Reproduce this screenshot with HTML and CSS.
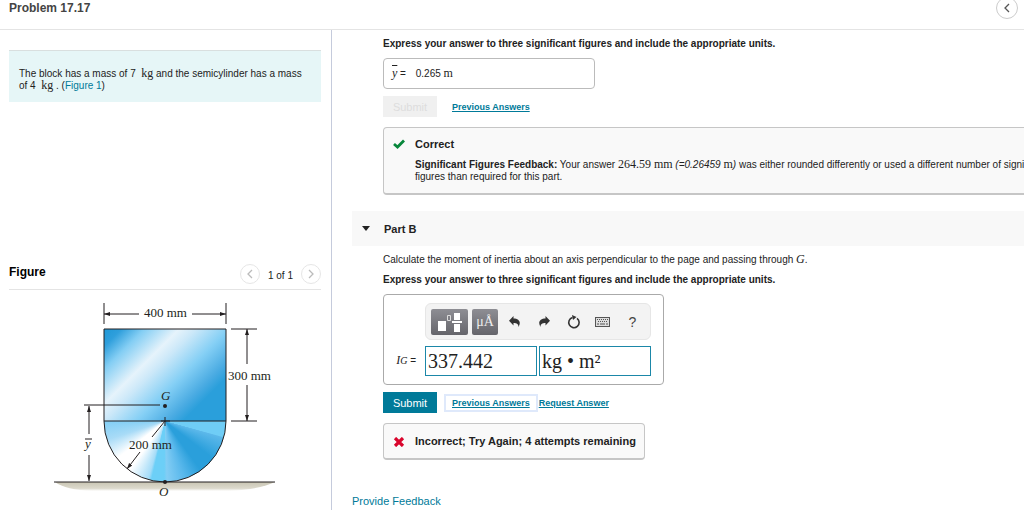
FILE: index.html
```html
<!DOCTYPE html>
<html lang="en">
<head>
    <meta charset="UTF-8">
    <meta name="viewport" content="width=device-width, initial-scale=1.0">
    <title>Problem 17.17</title>
    <link rel="stylesheet" href="styles.css">
</head>

<body>
    <header class="header">
        <h1 class="header__title">Problem 17.17</h1>
        <button class="round round--header" type="button" aria-label="Previous item">
            <svg width="8" height="10" viewBox="0 0 8 10"><path d="M6 1L2 5l4 4"/></svg>
        </button>
    </header>

    <div class="layout">
        <aside class="sidebar">
            <div class="intro">
                The block has a mass of 7 &nbsp;<span class="math">kg</span> and the semicylinder has a mass of 4 &nbsp;<span class="math">kg</span> . (<a href="#figure">Figure 1</a>)
            </div>

            <section class="figure" id="figure">
                <div class="figure__head">
                    <h2 class="figure__title">Figure</h2>
                    <div class="figure__nav">
                        <button class="round" type="button" aria-label="Previous figure">
                            <svg width="8" height="10" viewBox="0 0 8 10"><path d="M6 1L2 5l4 4"/></svg>
                        </button>
                        <span>1 of 1</span>
                        <button class="round" type="button" aria-label="Next figure">
                            <svg width="8" height="10" viewBox="0 0 8 10"><path d="M2 1l4 4-4 4"/></svg>
                        </button>
                    </div>
                </div>

                <svg class="drawing" width="236" height="212" viewBox="0 0 236 212" role="img" aria-label="Block on a semicylinder">
                    <defs>
                        <linearGradient id="block" gradientUnits="userSpaceOnUse" x1="56" y1="43" x2="152" y2="139">
                            <stop offset="0" stop-color="#249ad8"/>
                            <stop offset="0.06" stop-color="#2f9fdc"/>
                            <stop offset="0.18" stop-color="#84cef4"/>
                            <stop offset="0.36" stop-color="#e6f3fb"/>
                            <stop offset="0.45" stop-color="#cbe8f9"/>
                            <stop offset="0.62" stop-color="#84cff5"/>
                            <stop offset="0.78" stop-color="#4aabe2"/>
                            <stop offset="0.86" stop-color="#2a9fdb"/>
                        </linearGradient>
                        <linearGradient id="ground" x1="0" y1="0" x2="0" y2="1">
                            <stop offset="0" stop-color="#c9c5b3"/>
                            <stop offset="0.7" stop-color="#dcd9cc"/>
                            <stop offset="1" stop-color="#ffffff"/>
                        </linearGradient>
                        <marker id="arrow" viewBox="0 0 6 6" refX="6" refY="3" markerWidth="6" markerHeight="6" orient="auto-start-reverse">
                            <path d="M0 1l6 2-6 2z" fill="#231f20"/>
                        </marker>
                    </defs>

                    <path d="M5 192h220q-14 7-45 9H42q-26-1-37-9z" fill="url(#ground)"/>
                    <foreignObject x="54" y="131" width="122" height="61">
                        <div class="drawing__cylinder"></div>
                    </foreignObject>
                    <rect x="54" y="39" width="122" height="92" fill="url(#block)"/>

                    <g fill="none" stroke="#231f20">
                        <path d="M54 39h122v92a61 61 0 0 1-122 0z"/>
                        <path d="M54 131h122M111 131h9M115 127v9M4 192h221"/>
                        <path d="M54 13v21M176 13v21M181 39h26M181 131h26M34 115h76"/>
                        <path d="M89 24H54" marker-end="url(#arrow)"/>
                        <path d="M142 24h34" marker-end="url(#arrow)"/>
                        <path d="M197 74V39" marker-end="url(#arrow)"/>
                        <path d="M197 95v36" marker-end="url(#arrow)"/>
                        <path d="M39 144v-28" marker-end="url(#arrow)"/>
                        <path d="M39 165v26" marker-end="url(#arrow)"/>
                        <path d="M115 131l-13 16"/>
                        <path d="M90 162l-13 17" marker-end="url(#arrow)"/>
                        <path d="M35 149h7"/>
                    </g>
                    <circle cx="115" cy="116" r="2" fill="#231f20"/>
                    <circle cx="115" cy="192" r="2" fill="#231f20"/>

                    <g class="drawing__text">
                        <text x="94" y="27">400 mm</text>
                        <text x="178" y="90">300 mm</text>
                        <text x="79" y="159">200 mm</text>
                        <text x="111" y="110" font-style="italic">G</text>
                        <text x="109" y="206" font-style="italic">O</text>
                        <text x="35" y="158" font-style="italic">y</text>
                    </g>
                </svg>
            </section>
        </aside>

        <main class="content">
            <section class="part">
                <p class="instructions">Express your answer to three significant figures and include the appropriate units.</p>
                <div class="result">
                    <span class="math math--var math--bar">y</span> =
                    <span class="result__value">0.265 <span class="math">m</span></span>
                </div>
                <div class="actions">
                    <button class="submit" type="button" disabled>Submit</button>
                    <a class="actions__link" href="#">Previous Answers</a>
                </div>
                <div class="feedback">
                    <svg class="feedback__icon" width="12" height="10" viewBox="0 0 12 10"><path d="M1 5l3.500 3L11 1.500" fill="none" stroke="#07873b" stroke-width="2.800"/></svg>
                    <div>
                        <h3 class="feedback__title">Correct</h3>
                        <p class="feedback__text"><b>Significant Figures Feedback:</b> Your answer <span class="math">264.59 mm</span> <i>(=0.26459 <span class="math math--up">m</span>)</i> was either rounded differently or used a different number of significant figures than required for this part.</p>
                    </div>
                </div>
            </section>

            <h2 class="part-header">
                <svg width="8" height="5" viewBox="0 0 8 5"><path d="M0 0h8L4 5z" fill="#222"/></svg>
                Part B
            </h2>

            <section class="part part--open">
                <p class="question">Calculate the moment of inertia about an axis perpendicular to the page and passing through <span class="math math--var">G</span>.</p>
                <p class="instructions">Express your answer to three significant figures and include the appropriate units.</p>

                <div class="editor">
                    <div class="toolbar">
                        <button class="toolbar__dark" type="button" aria-label="Templates">
                            <svg width="26" height="20" viewBox="0 0 26 20">
                                <path d="M1 9h8v10H1zM17 1h6v7h-6zM17 12h6v8h-6zM15 9h10v2H15z" fill="#fff"/>
                                <path d="M10.500 3.500h3v5h-3z" fill="none" stroke="#ddd"/>
                            </svg>
                        </button>
                        <button class="toolbar__dark toolbar__dark--units" type="button" aria-label="Units">μÅ</button>
                        <button class="toolbar__tool" type="button" aria-label="Undo">
                            <svg width="12" height="12" viewBox="0 0 12 12"><path d="M4.500 0v2.500C10 2.500 12.500 6 9.500 11c0-3-1.500-4-5-4v2.500L0 4.800z" fill="#333"/></svg>
                        </button>
                        <button class="toolbar__tool" type="button" aria-label="Redo">
                            <svg width="12" height="12" viewBox="0 0 12 12"><path d="M7.500 0v2.500C2 2.500-.5 6 2.500 11c0-3 1.500-4 5-4v2.500L12 4.800z" fill="#333"/></svg>
                        </button>
                        <button class="toolbar__tool" type="button" aria-label="Reset">
                            <svg width="14" height="14" viewBox="0 0 14 14"><path d="M10 3.300A5.200 5.200 0 1 1 5.500 2.500" fill="none" stroke="#333" stroke-width="1.600"/><path d="M5 0l4.500 2L6 5z" fill="#333"/></svg>
                        </button>
                        <button class="toolbar__tool" type="button" aria-label="Keyboard shortcuts">
                            <svg width="15" height="10" viewBox="0 0 15 10"><rect x=".5" y=".5" width="14" height="9" fill="#ddd" stroke="#555"/><path d="M2 2.500h11M3 4.500h10" stroke="#555" stroke-dasharray="1 1"/><path d="M2 7h2m1 0h5m1 0h2" stroke="#555"/></svg>
                        </button>
                        <button class="toolbar__tool" type="button" aria-label="Help">?</button>
                    </div>
                    <label class="editor__label" for="value"><span class="math math--var">I<small>G</small></span> =</label>
                    <div class="editor__fields">
                        <input class="editor__input" id="value" type="text" value="337.442">
                        <input class="editor__input" type="text" value="kg • m²" aria-label="Units">
                    </div>
                </div>

                <div class="actions">
                    <button class="submit" type="button">Submit</button>
                    <a class="actions__link actions__link--focus" href="#">Previous Answers</a>
                    <a class="actions__link" href="#">Request Answer</a>
                </div>
                <div class="feedback feedback--short">
                    <svg class="feedback__icon" width="12" height="10" viewBox="0 0 12 10"><path d="M2 1l8 8M10 1L2 9" fill="none" stroke="#d9052c" stroke-width="3.200"/></svg>
                    <h3 class="feedback__title">Incorrect; Try Again; 4 attempts remaining</h3>
                </div>
            </section>

            <a class="provide" href="#">Provide Feedback</a>
        </main>
    </div>
</body>
</html>
```
FILE: styles.css
```css
*, *::before, *::after {
    box-sizing: border-box;
}
body {
    margin: 0;
    height: 100vh;
    display: flex;
    flex-direction: column;
    overflow: hidden;
    background: #fff;
    color: #222;
    font-family: "Liberation Sans", Arial, sans-serif;
    font-size: 10px;
    line-height: 12px;
}
h1, h2, h3, p {
    margin: 0;
}
a {
    color: #007a99;
    text-decoration: none;
}
button {
    font-family: inherit;
    border: none;
    padding: 0;
    cursor: pointer;
}
.math {
    font-family: "Liberation Serif", "Times New Roman", serif;
    font-size: 12px;
    line-height: 10px;
}
.math--var {
    font-style: italic;
}
.math--up {
    font-style: normal;
}
.math--bar {
    text-decoration: overline;
}
.header {
    flex: none;
    height: 30px;
    display: flex;
    justify-content: space-between;
    padding: 0 6px 0 9px;
    border-bottom: 1px solid #e4e4e4;
}
.header__title {
    color: #444;
    font-size: 12px;
    line-height: 16px;
}
.round {
    width: 20px;
    height: 20px;
    display: flex;
    align-items: center;
    justify-content: center;
    border: 1px solid #e6e6e6;
    border-radius: 50%;
    background: #fff;
}
.round path {
    fill: none;
    stroke: #bbb;
    stroke-width: 1.3;
}
.round--header {
    width: 22px;
    height: 22px;
    margin-top: -3px;
    border-color: #ccc;
}
.round--header path {
    stroke: #555;
}
.layout {
    flex: 1;
    display: flex;
    min-height: 0;
}
.sidebar {
    flex: none;
    width: 332px;
    padding: 20px 10px 0 9px;
    border-right: 1px solid #c5cbdc;
}
.intro {
    padding: 17px 10px 10px;
    border-top: 1px solid #d9dfdf;
    background: #e6f6f7;
}
.figure {
    margin-top: 162px;
}
.figure__head {
    height: 26px;
    display: flex;
    justify-content: space-between;
    border-bottom: 1px solid #e4e4e4;
}
.figure__title {
    color: #000;
    font-size: 12px;
    line-height: 16px;
}
.figure__nav {
    display: flex;
    gap: 8px;
    line-height: 24px;
}
.drawing {
    display: block;
    margin-left: 41px;
}
.drawing__cylinder {
    height: 61px;
    border-radius: 0 0 61px 61px;
    background: conic-gradient(from 90deg at 50% 0,
        #6fcdf6 0deg, #6fcdf6 15deg, #5cb8ea 16deg, #2a9fdb 38deg, #2a9fdb 54deg,
        #5bb9ec 72deg, #83cdf4 88deg, #6ccff7 91deg, #6ccff7 103deg, #a5dcf8 106deg,
        #ffffff 126deg, #ffffff 142deg, #a8dbf7 162deg, #84cff5 180deg, #6fcdf6 360deg);
}
.drawing__text {
    fill: #231f20;
    font-family: "Liberation Serif", "Times New Roman", serif;
    font-size: 13px;
}
.content {
    flex: 1;
    min-width: 0;
    padding: 8px 0 0 20px;
}
.part {
    width: 710px;
    padding-left: 31px;
}
.part--open {
    padding-top: 8px;
}
.instructions {
    font-weight: bold;
}
.question {
    margin-bottom: 8px;
}
.result {
    width: 212px;
    height: 31px;
    margin-top: 8px;
    padding: 0 8px;
    border: 1px solid #bbb;
    border-radius: 4px;
    line-height: 29px;
}
.result__value {
    margin-left: 7px;
}
.actions {
    display: flex;
    align-items: center;
    margin-top: 7px;
}
.submit {
    width: 54px;
    height: 21px;
    margin-right: 14px;
    background: #007a99;
    color: #fff;
    font-size: 11px;
}
.submit:disabled {
    background: #f0f0f0;
    color: #ddd;
}
.actions__link {
    padding: 1px;
    font-size: 9px;
    font-weight: bold;
    text-decoration: underline;
}
.feedback {
    display: flex;
    gap: 10px;
    min-height: 68px;
    margin-top: 10px;
    padding: 9px;
    border: 1px solid #c6c6c6;
    border-bottom-width: 2px;
    border-radius: 4px;
    background: #f9f9f9;
}
.feedback__icon {
    flex: none;
    margin-top: 2px;
}
.feedback__title {
    font-size: 11px;
    line-height: 14px;
}
.feedback__text {
    margin-top: 8px;
}
.feedback--short {
    align-items: center;
    width: 262px;
    min-height: 37px;
    white-space: nowrap;
}
.part-header {
    display: flex;
    align-items: center;
    gap: 14px;
    height: 35px;
    margin-top: 16px;
    padding-left: 10px;
    background: #f8f8f8;
    font-size: 11px;
}
.editor {
    display: grid;
    grid-template-columns: 32px 226px;
    grid-template-rows: 37px 30px;
    align-content: start;
    column-gap: 9px;
    row-gap: 6px;
    width: 281px;
    height: 91px;
    margin-top: 8px;
    padding-top: 8px;
    border: 1px solid #aaa;
    border-radius: 4px;
}
.toolbar {
    grid-column: 2;
    display: flex;
    align-items: center;
    gap: 4px;
    padding: 0 5px;
    border: 1px solid #e6e6e6;
    border-radius: 6px;
    background: #f3f3f3;
}
.toolbar__dark {
    width: 37px;
    height: 26px;
    display: flex;
    align-items: center;
    justify-content: center;
    border-radius: 2px;
    background: linear-gradient(#8e8e94, #65656b);
    color: #eee;
}
.toolbar__dark--units {
    width: 26px;
    font-family: "Liberation Serif", "Times New Roman", serif;
    font-size: 14px;
}
.toolbar__tool {
    flex: 1;
    display: flex;
    justify-content: center;
    background: none;
    color: #444;
    font-size: 14px;
}
.editor__label {
    align-self: center;
    justify-self: end;
    white-space: nowrap;
}
.editor__label small {
    font-size: 10px;
}
.editor__fields {
    display: flex;
    gap: 2px;
}
.editor__input {
    flex: 1;
    min-width: 0;
    height: 30px;
    padding: 0 2px;
    border: 1px solid #1b87a8;
    background: #fff;
    color: #222;
    font-family: "Liberation Serif", "Times New Roman", serif;
    font-size: 20px;
}
.actions__link--focus {
    margin: 0 2px 0 -5px;
    padding: 1px 6px;
    outline: 2px solid #dfe9fb;
}
.provide {
    display: inline-block;
    margin-top: 35px;
    font-size: 11px;
}
```
